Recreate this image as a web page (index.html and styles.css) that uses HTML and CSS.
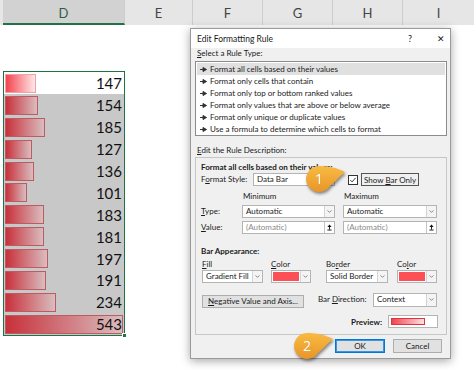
FILE: index.html
```html
<!DOCTYPE html>
<html lang="en">
<head>
    <meta charset="UTF-8">
    <title>Edit Formatting Rule</title>
    <link rel="stylesheet" href="styles.css">
</head>
<body>

    <!-- Spreadsheet column headers -->
    <div class="heads">
        <div class="head head-c"></div>
        <div class="head head-d">D</div>
        <div class="head head-e">E</div>
        <div class="head head-f">F</div>
        <div class="head head-g">G</div>
        <div class="head head-h">H</div>
        <div class="head head-i">I</div>
    </div>

    <!-- Selected range with data bars -->
    <div class="range">
        <div class="cell active"><div class="bar" style="width:31px"></div><span class="num">147</span></div>
        <div class="cell"><div class="bar" style="width:33px"></div><span class="num">154</span></div>
        <div class="cell"><div class="bar" style="width:40px"></div><span class="num">185</span></div>
        <div class="cell"><div class="bar" style="width:27px"></div><span class="num">127</span></div>
        <div class="cell"><div class="bar" style="width:29px"></div><span class="num">136</span></div>
        <div class="cell"><div class="bar" style="width:22px"></div><span class="num">101</span></div>
        <div class="cell"><div class="bar" style="width:39px"></div><span class="num">183</span></div>
        <div class="cell"><div class="bar" style="width:39px"></div><span class="num">181</span></div>
        <div class="cell"><div class="bar" style="width:43px"></div><span class="num">197</span></div>
        <div class="cell"><div class="bar" style="width:41px"></div><span class="num">191</span></div>
        <div class="cell"><div class="bar" style="width:51px"></div><span class="num">234</span></div>
        <div class="cell"><div class="bar" style="width:118px"></div><span class="num">543</span></div>
        <div class="fill-handle"></div>
    </div>

    <!-- Dialog -->
    <div class="dialog">
        <div class="titlebar">
            <span class="title">Edit Formatting Rule</span>
            <span class="help">?</span>
            <span class="close">&#x2715;</span>
        </div>

        <div class="caption"><u>S</u>elect a Rule Type:</div>
        <div class="rule-list">
            <div class="rule sel"><svg class="ra" viewBox="0 0 7 5"><path d="M0 2.5h3.5M3 0.5l3.5 2-3.5 2z" stroke="#333" fill="#333" stroke-width="1"/></svg>Format all cells based on their values</div>
            <div class="rule"><svg class="ra" viewBox="0 0 7 5"><path d="M0 2.5h3.5M3 0.5l3.5 2-3.5 2z" stroke="#333" fill="#333" stroke-width="1"/></svg>Format only cells that contain</div>
            <div class="rule"><svg class="ra" viewBox="0 0 7 5"><path d="M0 2.5h3.5M3 0.5l3.5 2-3.5 2z" stroke="#333" fill="#333" stroke-width="1"/></svg>Format only top or bottom ranked values</div>
            <div class="rule"><svg class="ra" viewBox="0 0 7 5"><path d="M0 2.5h3.5M3 0.5l3.5 2-3.5 2z" stroke="#333" fill="#333" stroke-width="1"/></svg>Format only values that are above or below average</div>
            <div class="rule"><svg class="ra" viewBox="0 0 7 5"><path d="M0 2.5h3.5M3 0.5l3.5 2-3.5 2z" stroke="#333" fill="#333" stroke-width="1"/></svg>Format only unique or duplicate values</div>
            <div class="rule"><svg class="ra" viewBox="0 0 7 5"><path d="M0 2.5h3.5M3 0.5l3.5 2-3.5 2z" stroke="#333" fill="#333" stroke-width="1"/></svg>Use a formula to determine which cells to format</div>
        </div>

        <div class="caption caption-2"><u>E</u>dit the Rule Description:</div>
        <div class="desc">
            <div class="bold-line">Format all cells based on their values:</div>

            <div class="style-row">
                <span class="lbl lbl-style">F<u>o</u>rmat Style:</span>
                <div class="drop drop-style"><span class="dtext">Data Bar</span><span class="arr"></span></div>
                <span class="check">
                    <svg viewBox="0 0 9 9"><path d="M1.5 4.6l2 2 4-4.6" stroke="#222" stroke-width="1" fill="none"/></svg>
                </span>
                <span class="check-label">Show <u>B</u>ar Only</span>
            </div>

            <div class="minmax">
                <span></span>
                <span class="mm">Minimum</span>
                <span class="mm">Maximum</span>

                <span class="lbl"><u>T</u>ype:</span>
                <div class="drop"><span class="dtext">Automatic</span><span class="arr"><svg viewBox="0 0 9 13"><path d="M2.2 5.2l2.3 2.3 2.3-2.3" stroke="#777" fill="none"/></svg></span></div>
                <div class="drop"><span class="dtext">Automatic</span><span class="arr"><svg viewBox="0 0 9 13"><path d="M2.2 5.2l2.3 2.3 2.3-2.3" stroke="#777" fill="none"/></svg></span></div>

                <span class="lbl"><u>V</u>alue:</span>
                <div class="field"><span class="dtext gray">(Automatic)</span><span class="up"><svg viewBox="0 0 9 13"><path d="M4.5 3l-2.5 3h5z" fill="#111"/><path d="M4.5 5.5v3.5M2 9.5h5" stroke="#111" stroke-width="1.1"/></svg></span></div>
                <div class="field"><span class="dtext gray">(Automatic)</span><span class="up"><svg viewBox="0 0 9 13"><path d="M4.5 3l-2.5 3h5z" fill="#111"/><path d="M4.5 5.5v3.5M2 9.5h5" stroke="#111" stroke-width="1.1"/></svg></span></div>
            </div>

            <div class="bold-line bold-2">Bar Appearance:</div>

            <div class="appear">
                <span class="lbl"><u>F</u>ill</span>
                <span class="lbl"><u>C</u>olor</span>
                <span class="lbl">Bo<u>r</u>der</span>
                <span class="lbl">Co<u>l</u>or</span>

                <div class="drop w-fill"><span class="dtext">Gradient Fill</span><span class="arr"><svg viewBox="0 0 9 13"><path d="M2.2 5.2l2.3 2.3 2.3-2.3" stroke="#777" fill="none"/></svg></span></div>
                <div class="drop w-color"><span class="swatch"></span><span class="arr"><svg viewBox="0 0 9 13"><path d="M2.2 5.2l2.3 2.3 2.3-2.3" stroke="#777" fill="none"/></svg></span></div>
                <div class="drop w-border"><span class="dtext">Solid Border</span><span class="arr"><svg viewBox="0 0 9 13"><path d="M2.2 5.2l2.3 2.3 2.3-2.3" stroke="#777" fill="none"/></svg></span></div>
                <div class="drop w-color"><span class="swatch"></span><span class="arr"><svg viewBox="0 0 9 13"><path d="M2.2 5.2l2.3 2.3 2.3-2.3" stroke="#777" fill="none"/></svg></span></div>
            </div>

            <div class="neg-row">
                <span class="btn btn-neg"><u>N</u>egative Value and Axis...</span>
                <span class="lbl lbl-dir">Bar <u>D</u>irection:</span>
                <div class="drop w-dir"><span class="dtext">Context</span><span class="arr"><svg viewBox="0 0 9 13"><path d="M2.2 5.2l2.3 2.3 2.3-2.3" stroke="#777" fill="none"/></svg></span></div>
            </div>

            <div class="preview-row">
                <span class="preview-lbl">Preview:</span>
                <span class="preview"><span class="pbar"></span></span>
            </div>
        </div>

        <div class="buttons">
            <span class="btn btn-ok">OK</span>
            <span class="btn btn-cancel">Cancel</span>
        </div>
    </div>

    <!-- Callouts -->
    <svg class="callout callout-1" viewBox="0 0 44 32">
        <defs>
            <linearGradient id="og" x1="0" y1="0" x2="0" y2="1">
                <stop offset="0" stop-color="#f8bb42"/>
                <stop offset="1" stop-color="#e8952a"/>
            </linearGradient>
        </defs>
        <path d="M41 8C33 4 25 2 15 2A13 13 0 1 0 26 22C31 18 36 12 41 8Z" fill="url(#og)"/>
        <text x="15" y="20" text-anchor="middle">1</text>
    </svg>
    <svg class="callout callout-2" viewBox="0 0 44 32">
        <path d="M41 8C33 4 25 2 15 2A13 13 0 1 0 26 22C31 18 36 12 41 8Z" fill="url(#og)"/>
        <text x="15" y="20" text-anchor="middle">2</text>
    </svg>

</body>
</html>
```

FILE: styles.css
```css
/* Halaman dasar */
body {
    margin: 0;
    width: 474px;
    height: 370px;
    overflow: hidden;
    position: relative;
    background: #fff;
    font-family: Lato, "Liberation Sans", sans-serif;
}

/* Header kolom */
.heads {
    display: flex;
    height: 25px;
    background: #e6e6e6;
}
.head {
    box-sizing: border-box;
    height: 25px;
    line-height: 27px;
    text-align: center;
    font-size: 13px;
    color: #444;
    border-right: 1px solid #cdcdcd;
}
.head-c { width: 3px; border-right: none; }
.head-d {
    width: 122px;
    background: #d2d2d2;
    color: #2f5f42;
    border-bottom: 2px solid #217346;
}
.head-e { width: 68px; }
.head-f, .head-g, .head-h { width: 70px; }
.head-i { flex: 1; border-right: none; }

/* Range terpilih */
.range {
    position: relative;
    box-sizing: border-box;
    width: 122px;
    margin: 46px 0 0 3px;
    border: 1px solid #217346;
}
.cell {
    display: grid;
    height: 21.9px;
    background: #c8c8c8;
}
.cell.active { background: #fff; }
.bar {
    grid-area: 1 / 1;
    align-self: start;
    box-sizing: border-box;
    height: 19px;
    margin: 2px 0 0 1px;
    border: 1px solid #bd5a62;
    background: linear-gradient(to right, #c8313b, #d9bdbf);
}
.active .bar {
    border-color: #f3a0a4;
    background: linear-gradient(to right, #f4444f, #ffe8e9);
}
.num {
    grid-area: 1 / 1;
    justify-self: end;
    align-self: center;
    padding: 1px 2px 0 0;
    font-size: 15px;
    color: #111;
}
.fill-handle {
    position: absolute;
    right: -3px;
    bottom: -3px;
    width: 5px;
    height: 5px;
    background: #217346;
    border: 1px solid #fff;
    box-sizing: border-box;
}

/* Dialog */
.dialog {
    position: absolute;
    left: 190px;
    top: 28px;
    width: 261px;
    height: 331px;
    box-sizing: border-box;
    border: 1px solid #9a9a9a;
    background: #f0f0f0;
    box-shadow: 0 2px 9px rgba(0, 0, 0, 0.35);
    font-size: 8px;
    color: #1a1a1a;
}
u { text-decoration: underline; }

.titlebar {
    display: flex;
    align-items: center;
    height: 19px;
    padding-left: 6px;
    background: #fff;
    font-size: 8.5px;
}
.title { flex: 1; }
.help { width: 12px; text-align: center; margin-right: 19px; font-size: 9px; }
.close { width: 12px; text-align: center; margin-right: 3px; font-size: 9px; }

.caption {
    height: 9px;
    line-height: 9px;
    padding: 1px 0 0 6px;
}
.caption-2 { margin-top: 9px; }

.rule-list {
    box-sizing: border-box;
    width: 252px;
    height: 75px;
    margin: 3px 0 0 4px;
    padding-top: 1px;
    border: 1px solid #8c8c8c;
    background: #fff;
}
.rule {
    display: flex;
    align-items: center;
    height: 12px;
    padding-left: 4px;
}
.rule.sel { background: #e0e0e0; margin: 0 1px; padding-left: 3px; }
.ra { width: 7px; height: 5px; margin-right: 3px; }

.desc {
    box-sizing: border-box;
    width: 252px;
    height: 178px;
    margin: 2px 0 0 4px;
    padding: 4px 0 0 5px;
    border: 1px solid #c6c6c6;
}
.bold-line {
    font-weight: bold;
    height: 10px;
    line-height: 10px;
}
.bold-2 { margin-top: 12px; }

.lbl { line-height: 13px; }

.style-row {
    display: flex;
    align-items: center;
    height: 13px;
    margin-top: 1px;
}
.lbl-style { width: 52px; }
.drop, .field {
    display: flex;
    box-sizing: border-box;
    height: 13px;
    border: 1px solid #b4b4b4;
    background: #fff;
}
.drop-style { width: 82px; }
.dtext {
    flex: 1;
    padding-left: 3px;
    line-height: 11px;
    white-space: nowrap;
    overflow: hidden;
}
.gray { color: #8a8a8a; }
.arr, .up {
    width: 9px;
    border-left: 1px solid #d4d4d4;
    background: #f4f4f4;
}
.arr svg, .up svg { display: block; width: 9px; height: 11px; }
.up { background: #fff; border-left-color: #c4c4c4; }

.check {
    box-sizing: border-box;
    width: 10px;
    height: 10px;
    margin-left: 13px;
    border: 1px solid #333;
    background: #fff;
}
.check svg { display: block; width: 8px; height: 8px; }
.check-label {
    box-sizing: border-box;
    height: 13px;
    margin-left: 3px;
    padding: 0 2px;
    line-height: 12px;
    border: 1px solid #555;
}

.minmax {
    display: grid;
    grid-template-columns: 33px 93px 94px;
    column-gap: 8px;
    margin-top: 5px;
    row-gap: 3px;
}
.mm { padding-left: 1px; line-height: 10px; margin-bottom: 1px; }

.appear {
    display: grid;
    grid-template-columns: 69px 55px 71px 40px;
    margin-top: 3px;
    padding-left: 1px;
    row-gap: 1px;
}
.appear .lbl { line-height: 10px; }
.w-fill { width: 61px; }
.w-color { width: 40px; }
.w-border { width: 62px; }
.swatch {
    flex: 1;
    margin: 1px;
    background: #fa5056;
}

.neg-row {
    display: flex;
    align-items: center;
    height: 15px;
    margin-top: 9px;
    padding-left: 1px;
    padding-right: 9px;
}
.btn {
    box-sizing: border-box;
    text-align: center;
    background: #e1e1e1;
    border: 1px solid #adadad;
}
.btn-neg {
    width: 102px;
    height: 13px;
    line-height: 11px;
    margin-top: 3px;
}
.lbl-dir { margin-left: 14px; }
.w-dir { width: 64px; margin-left: auto; height: 14px; }

.preview-row {
    display: flex;
    justify-content: flex-end;
    align-items: center;
    margin-top: 8px;
    padding-right: 8px;
}
.preview-lbl { font-weight: bold; margin-right: 6px; }
.preview {
    box-sizing: border-box;
    width: 50px;
    height: 13px;
    padding: 2px;
    border: 1px solid #b4b4b4;
    background: #fff;
}
.pbar {
    display: block;
    box-sizing: border-box;
    width: 34px;
    height: 7px;
    border: 1px solid #e0333d;
    background: linear-gradient(to right, #f0454f, #fde2e4);
}

.buttons {
    display: flex;
    justify-content: flex-end;
    gap: 8px;
    margin: 4px 8px 0 0;
}
.btn-ok, .btn-cancel {
    width: 50px;
    height: 14px;
    line-height: 12px;
}
.btn-ok { border-color: #0078d7; box-shadow: inset 0 0 0 1px #3c95dd; }
.btn-cancel { width: 49px; }

/* Callout bernomor */
.callout {
    position: absolute;
    width: 44px;
    height: 32px;
    filter: drop-shadow(1px 2px 1.5px rgba(0, 0, 0, 0.45));
}
.callout text {
    fill: #fff;
    font-family: "Open Sans", sans-serif;
    font-size: 14px;
}
.callout-1 { left: 304px; top: 164px; }
.callout-2 { left: 292px; top: 331px; }
```
